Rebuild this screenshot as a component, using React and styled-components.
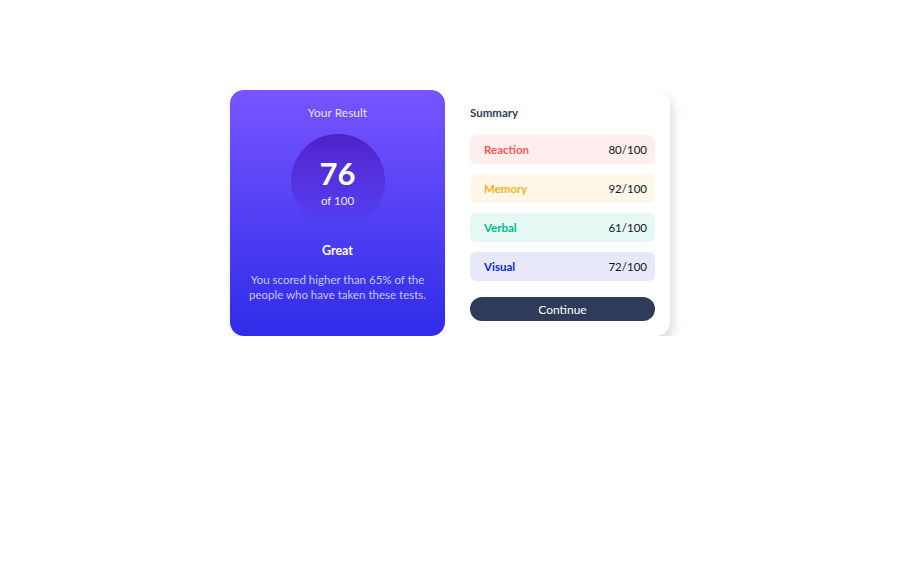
import React from "react";
import styled, { createGlobalStyle } from "styled-components";

const Global = createGlobalStyle`
  html, body { margin: 0; padding: 0; background: #ffffff; }
  body { font-family: Lato, "Noto Sans", sans-serif; }
`;

const Page = styled.main`
  display: flex;
  justify-content: center;
  padding-top: 90px;
`;

const Card = styled.section`
  display: flex;
  width: 440px;
  height: 246px;
  background: #fff;
  border-radius: 14px;
  box-shadow: 3px 6px 10px rgba(48, 59, 89, 0.18);
`;

const ResultPanel = styled.div`
  width: 215px;
  box-sizing: border-box;
  padding: 15px 16px 0;
  border-radius: 14px;
  background: linear-gradient(180deg, #7755ff 0%, #2f2ce9 100%);
  display: flex;
  flex-direction: column;
  align-items: center;
  text-align: center;
`;

const PanelTitle = styled.h2`
  margin: 0;
  font-size: 12px;
  line-height: 16px;
  font-weight: 400;
  color: #e6e2ff;
`;

const Circle = styled.div`
  margin-top: 13px;
  width: 94px;
  height: 94px;
  border-radius: 50%;
  background: linear-gradient(180deg, #4d21c9 0%, rgba(37, 33, 201, 0) 100%);
  display: flex;
  flex-direction: column;
  align-items: center;
  justify-content: center;
  padding-top: 3px;
  box-sizing: border-box;
`;

const Score = styled.div`
  font-size: 31px;
  line-height: 32px;
  font-weight: 700;
  color: #fff;
`;

const OutOf = styled.div`
  margin-top: 5px;
  font-size: 11.5px;
  line-height: 14px;
  color: #ebe8ff;
`;

const Verdict = styled.div`
  margin-top: 15px;
  font-size: 12.5px;
  line-height: 16px;
  font-weight: 700;
  color: #fff;
`;

const Description = styled.p`
  margin: 13px 0 0;
  font-size: 11.5px;
  line-height: 15px;
  color: #c8c5ff;
`;

const SummaryPanel = styled.div`
  flex: 1;
  box-sizing: border-box;
  padding: 15px 15px 15px 25px;
  display: flex;
  flex-direction: column;
`;

const SummaryTitle = styled.h3`
  margin: 0;
  font-size: 11.5px;
  line-height: 16px;
  font-weight: 700;
  color: #303b59;
`;

const List = styled.ul`
  list-style: none;
  margin: 14px 0 0;
  padding: 0;
  display: flex;
  flex-direction: column;
  gap: 10px;
`;

const Row = styled.li`
  height: 29px;
  box-sizing: border-box;
  padding: 0 8px 0 14px;
  border-radius: 6px;
  background: ${(p) => p.$bg};
  display: flex;
  align-items: center;
  justify-content: space-between;
  font-size: 11.5px;
`;

const Label = styled.span`
  font-weight: 700;
  color: ${(p) => p.$color};
`;

const Value = styled.span`
  font-weight: 400;
  color: #111526;
`;

const Button = styled.button`
  margin-top: 16px;
  height: 24px;
  border: none;
  border-radius: 12px;
  background: #303b59;
  color: #fff;
  font-family: inherit;
  font-size: 12px;
  font-weight: 400;
  cursor: pointer;
`;

const items = [
  { label: "Reaction", value: "80/100", color: "#ff5757", bg: "#ffeeee" },
  { label: "Memory", value: "92/100", color: "#ffb01f", bg: "#fff7ea" },
  { label: "Verbal", value: "61/100", color: "#00bb8f", bg: "#e6f8f4" },
  { label: "Visual", value: "72/100", color: "#1125d6", bg: "#e7e9fb" },
];

export default function App() {
  return (
    <>
      <Global />
      <Page>
        <Card>
          <ResultPanel>
            <PanelTitle>Your Result</PanelTitle>
            <Circle>
              <Score>76</Score>
              <OutOf>of 100</OutOf>
            </Circle>
            <Verdict>Great</Verdict>
            <Description>
              You scored higher than 65% of the people who have taken these tests.
            </Description>
          </ResultPanel>
          <SummaryPanel>
            <SummaryTitle>Summary</SummaryTitle>
            <List>
              {items.map((it) => (
                <Row key={it.label} $bg={it.bg}>
                  <Label $color={it.color}>{it.label}</Label>
                  <Value>{it.value}</Value>
                </Row>
              ))}
            </List>
            <Button>Continue</Button>
          </SummaryPanel>
        </Card>
      </Page>
    </>
  );
}
